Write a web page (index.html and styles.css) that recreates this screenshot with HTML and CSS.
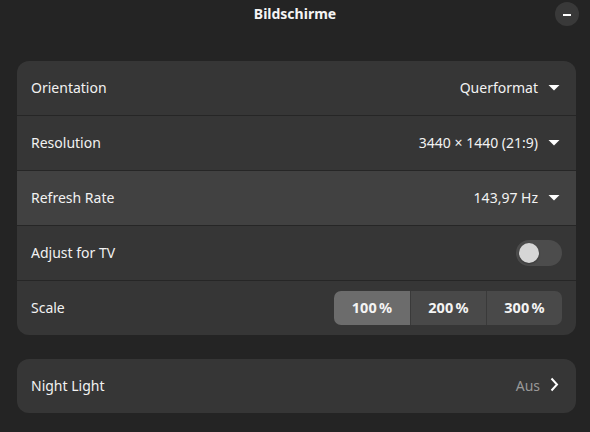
FILE: index.html
```html
<!DOCTYPE html>
<html lang="de">
<head>
<meta charset="utf-8">
<title>Bildschirme</title>
<link rel="stylesheet" href="styles.css">
</head>
<body>
<div class="window">
  <header class="headerbar">
    <div class="hb-side"></div>
    <div class="hb-title">Bildschirme</div>
    <div class="hb-side hb-end">
      <button class="hb-btn" aria-label="Minimieren">
        <svg width="10" height="10" viewBox="0 0 10 10"><rect x="1" y="5" width="8" height="2" fill="#ffffff"/></svg>
      </button>
    </div>
  </header>
  <main class="content">
    <section class="card">
      <div class="row">
        <span class="label">Orientation</span>
        <span class="value">Querformat</span>
        <svg class="icon" width="16" height="16" viewBox="0 0 16 16"><path d="M2.5 6h11L8 11.5z" fill="#ffffff"/></svg>
      </div>
      <div class="sep"></div>
      <div class="row">
        <span class="label">Resolution</span>
        <span class="value">3440 × 1440 (21:9)</span>
        <svg class="icon" width="16" height="16" viewBox="0 0 16 16"><path d="M2.5 6h11L8 11.5z" fill="#ffffff"/></svg>
      </div>
      <div class="sep"></div>
      <div class="row row-hover">
        <span class="label">Refresh Rate</span>
        <span class="value">143,97 Hz</span>
        <svg class="icon" width="16" height="16" viewBox="0 0 16 16"><path d="M2.5 6h11L8 11.5z" fill="#ffffff"/></svg>
      </div>
      <div class="sep"></div>
      <div class="row">
        <span class="label">Adjust for TV</span>
        <span class="switch"><span class="knob"></span></span>
      </div>
      <div class="sep"></div>
      <div class="row">
        <span class="label">Scale</span>
        <div class="linked">
          <button class="seg seg-on">100&#8201;%</button>
          <button class="seg">200&#8201;%</button>
          <button class="seg">300&#8201;%</button>
        </div>
      </div>
    </section>
    <section class="card">
      <div class="row">
        <span class="label">Night Light</span>
        <span class="value dim">Aus</span>
        <svg class="icon" width="16" height="16" viewBox="0 0 16 16"><path d="M5.5 1.5L11 7.5l-5.5 6" fill="none" stroke="#ffffff" stroke-width="2" stroke-linejoin="miter"/></svg>
      </div>
    </section>
  </main>
</div>
</body>
</html>
```
FILE: styles.css
```css
* { box-sizing: border-box; }
html, body {
  margin: 0;
  padding: 0;
  background: #242424;
  color: #ffffff;
  font-family: "Noto Sans", "Open Sans", sans-serif;
  font-size: 14px;
}
.window {
  width: 590px;
  height: 432px;
  overflow: hidden;
  display: flex;
  flex-direction: column;
}
.headerbar {
  height: 28px;
  display: grid;
  grid-template-columns: 1fr auto 1fr;
  align-items: center;
  padding: 0 11px 0 11px;
}
.hb-title {
  font-weight: 700;
  font-size: 14px;
  color: #f4f4f4;
  margin-bottom: 2px;
}
.hb-end {
  display: flex;
  justify-content: flex-end;
}
.hb-btn {
  width: 24px;
  height: 24px;
  border-radius: 50%;
  border: 0;
  padding: 0;
  background: #393939;
  display: flex;
  align-items: center;
  justify-content: center;
  margin-bottom: 1px;
}
.content {
  display: flex;
  flex-direction: column;
  gap: 24px;
  padding: 33px 14px 0 17px;
}
.card {
  background: #363636;
  border-radius: 12px;
  overflow: hidden;
  display: flex;
  flex-direction: column;
}
.sep {
  height: 1px;
  background: #262626;
}
.row {
  height: 54px;
  display: flex;
  align-items: center;
  padding: 0 14px 2px 14px;
}
.row-hover {
  background: #414141;
}
.label {
  flex: 1;
  color: #f2f2f2;
}
.value {
  color: #f2f2f2;
  margin-right: 8px;
}
.value.dim {
  color: #999999;
  margin-right: 6px;
}
.icon {
  flex: none;
  display: block;
}
.switch {
  width: 46px;
  height: 26px;
  border-radius: 13px;
  background: #4c4c4c;
  padding: 3px;
  display: flex;
  margin-top: 2px;
}
.knob {
  width: 20px;
  height: 20px;
  border-radius: 50%;
  background: #d6d6d6;
  box-shadow: 0 1px 2px rgba(0,0,0,0.3);
}
.linked {
  display: flex;
  height: 34px;
  border-radius: 7px;
  overflow: hidden;
  margin-top: 2px;
}
.seg {
  width: 76px;
  height: 34px;
  border: 0;
  margin: 0;
  padding: 0 0 2px 0;
  background: #494949;
  color: #f4f4f4;
  font-family: "Noto Sans", "Open Sans", sans-serif;
  font-size: 14.5px;
  font-weight: 700;
}
.seg + .seg {
  border-left: 1px solid #3a3a3a;
}
.seg-on {
  background: #6c6c6c;
}
```
